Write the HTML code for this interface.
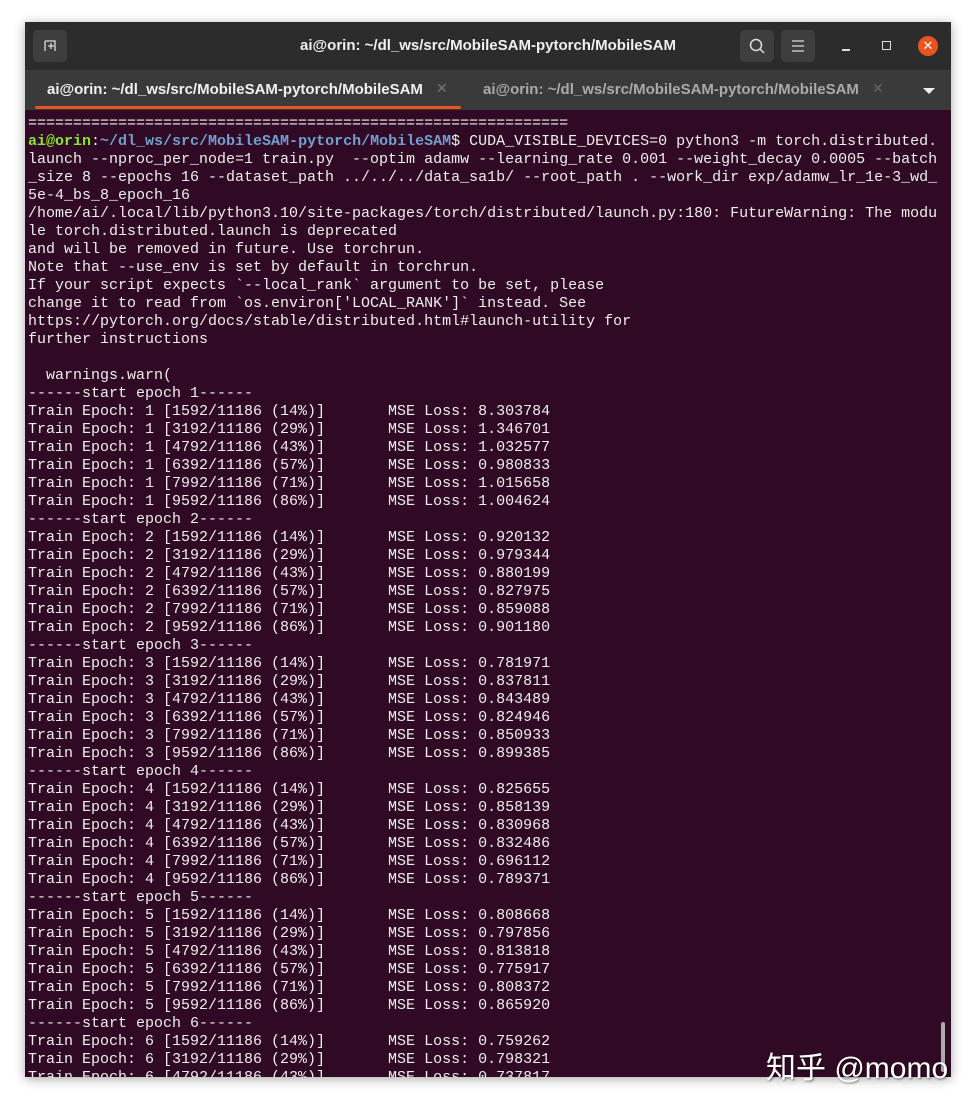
<!DOCTYPE html>
<html><head><meta charset="utf-8"><style>
body{margin:0;width:976px;height:1105px;background:#fff;position:relative;overflow:hidden;font-family:"Liberation Sans",sans-serif}
.win{position:absolute;left:25px;top:22px;width:926px;height:1055px;background:#300a24;box-shadow:0 2px 10px rgba(0,0,0,.35);overflow:hidden}
.title{position:absolute;left:0;top:0;width:926px;height:48px;background:#2c2c2c;color:#f0f0f0;font-weight:bold;font-size:15px}
.tabs{position:absolute;left:0;top:48px;width:926px;height:40px;background:#3a3a3a}
.btn{position:absolute;top:8px;width:34px;height:32px;background:#3e3e3e;border-radius:5px}
pre{position:absolute;left:3px;top:93px;margin:0;font-family:"Liberation Mono",monospace;font-size:15px;line-height:18px;color:#eeeeec}
.g{color:#8ae234;font-weight:bold}.b{color:#729fcf;font-weight:bold}
</style></head><body>
<div class="win">
<div class="title">
<div class="btn" style="left:8px;"><svg width="34" height="32"><path d="M12 11v10M12 11h10v10M15 16h6M18 13v6" stroke="#ddd" stroke-width="1.3" fill="none"/></svg></div>
<div style="position:absolute;left:0;width:926px;top:15px;text-align:center">ai@orin: ~/dl_ws/src/MobileSAM-pytorch/MobileSAM</div>
<div class="btn" style="left:715px"><svg width="34" height="32"><circle cx="16" cy="15" r="5.5" stroke="#ddd" stroke-width="1.5" fill="none"/><path d="M20 19l4 4" stroke="#ddd" stroke-width="1.5"/></svg></div>
<div class="btn" style="left:756px"><svg width="34" height="32"><path d="M11 11h12M11 16h12M11 21h12" stroke="#ddd" stroke-width="1.3"/></svg></div>
<div style="position:absolute;left:817px;top:27px;width:8px;height:2px;background:#ddd"></div>
<div style="position:absolute;left:857px;top:19px;width:7px;height:7px;border:1.5px solid #ddd"></div>
<div style="position:absolute;left:893px;top:14px;width:20px;height:20px;border-radius:50%;background:#e95420;color:#fff;text-align:center;line-height:20px;font-size:13px;font-weight:normal">✕</div>
</div>
<div class="tabs">
<div style="position:absolute;left:22px;top:11px;color:#f0f0f0;font-weight:bold;font-size:15px">ai@orin: ~/dl_ws/src/MobileSAM-pytorch/MobileSAM</div>
<div style="position:absolute;left:411px;top:10px;color:#777;font-size:14px">✕</div>
<div style="position:absolute;left:10px;top:36px;width:426px;height:3px;background:#e95420;border-radius:2px"></div>
<div style="position:absolute;left:458px;top:11px;color:#aaa;font-weight:bold;font-size:15px">ai@orin: ~/dl_ws/src/MobileSAM-pytorch/MobileSAM</div>
<div style="position:absolute;left:847px;top:10px;color:#666;font-size:14px">✕</div>
<div style="position:absolute;left:898px;top:18px;border-left:6px solid transparent;border-right:6px solid transparent;border-top:6px solid #eee"></div>
</div>
<pre>============================================================
<span class="g">ai@orin</span>:<span class="b">~/dl_ws/src/MobileSAM-pytorch/MobileSAM</span>$ CUDA_VISIBLE_DEVICES=0 python3 -m torch.distributed.
launch --nproc_per_node=1 train.py  --optim adamw --learning_rate 0.001 --weight_decay 0.0005 --batch
_size 8 --epochs 16 --dataset_path ../../../data_sa1b/ --root_path . --work_dir exp/adamw_lr_1e-3_wd_
5e-4_bs_8_epoch_16
/home/ai/.local/lib/python3.10/site-packages/torch/distributed/launch.py:180: FutureWarning: The modu
le torch.distributed.launch is deprecated
and will be removed in future. Use torchrun.
Note that --use_env is set by default in torchrun.
If your script expects `--local_rank` argument to be set, please
change it to read from `os.environ['LOCAL_RANK']` instead. See
https://pytorch.org/docs/stable/distributed.html#launch-utility for
further instructions

  warnings.warn(
------start epoch 1------
Train Epoch: 1 [1592/11186 (14%)]       MSE Loss: 8.303784
Train Epoch: 1 [3192/11186 (29%)]       MSE Loss: 1.346701
Train Epoch: 1 [4792/11186 (43%)]       MSE Loss: 1.032577
Train Epoch: 1 [6392/11186 (57%)]       MSE Loss: 0.980833
Train Epoch: 1 [7992/11186 (71%)]       MSE Loss: 1.015658
Train Epoch: 1 [9592/11186 (86%)]       MSE Loss: 1.004624
------start epoch 2------
Train Epoch: 2 [1592/11186 (14%)]       MSE Loss: 0.920132
Train Epoch: 2 [3192/11186 (29%)]       MSE Loss: 0.979344
Train Epoch: 2 [4792/11186 (43%)]       MSE Loss: 0.880199
Train Epoch: 2 [6392/11186 (57%)]       MSE Loss: 0.827975
Train Epoch: 2 [7992/11186 (71%)]       MSE Loss: 0.859088
Train Epoch: 2 [9592/11186 (86%)]       MSE Loss: 0.901180
------start epoch 3------
Train Epoch: 3 [1592/11186 (14%)]       MSE Loss: 0.781971
Train Epoch: 3 [3192/11186 (29%)]       MSE Loss: 0.837811
Train Epoch: 3 [4792/11186 (43%)]       MSE Loss: 0.843489
Train Epoch: 3 [6392/11186 (57%)]       MSE Loss: 0.824946
Train Epoch: 3 [7992/11186 (71%)]       MSE Loss: 0.850933
Train Epoch: 3 [9592/11186 (86%)]       MSE Loss: 0.899385
------start epoch 4------
Train Epoch: 4 [1592/11186 (14%)]       MSE Loss: 0.825655
Train Epoch: 4 [3192/11186 (29%)]       MSE Loss: 0.858139
Train Epoch: 4 [4792/11186 (43%)]       MSE Loss: 0.830968
Train Epoch: 4 [6392/11186 (57%)]       MSE Loss: 0.832486
Train Epoch: 4 [7992/11186 (71%)]       MSE Loss: 0.696112
Train Epoch: 4 [9592/11186 (86%)]       MSE Loss: 0.789371
------start epoch 5------
Train Epoch: 5 [1592/11186 (14%)]       MSE Loss: 0.808668
Train Epoch: 5 [3192/11186 (29%)]       MSE Loss: 0.797856
Train Epoch: 5 [4792/11186 (43%)]       MSE Loss: 0.813818
Train Epoch: 5 [6392/11186 (57%)]       MSE Loss: 0.775917
Train Epoch: 5 [7992/11186 (71%)]       MSE Loss: 0.808372
Train Epoch: 5 [9592/11186 (86%)]       MSE Loss: 0.865920
------start epoch 6------
Train Epoch: 6 [1592/11186 (14%)]       MSE Loss: 0.759262
Train Epoch: 6 [3192/11186 (29%)]       MSE Loss: 0.798321
Train Epoch: 6 [4792/11186 (43%)]       MSE Loss: 0.737817</pre>
<div style="position:absolute;left:916px;top:1000px;width:4px;height:50px;background:#aaa;border-radius:2px"></div>
</div>
<div style="position:absolute;left:766px;top:1043px;color:#fff;font-size:30px;font-family:'Liberation Sans','Noto Sans CJK SC',sans-serif;text-shadow:1px 1px 2px rgba(0,0,0,.5);white-space:nowrap">知乎 @momo</div>
</body></html>
